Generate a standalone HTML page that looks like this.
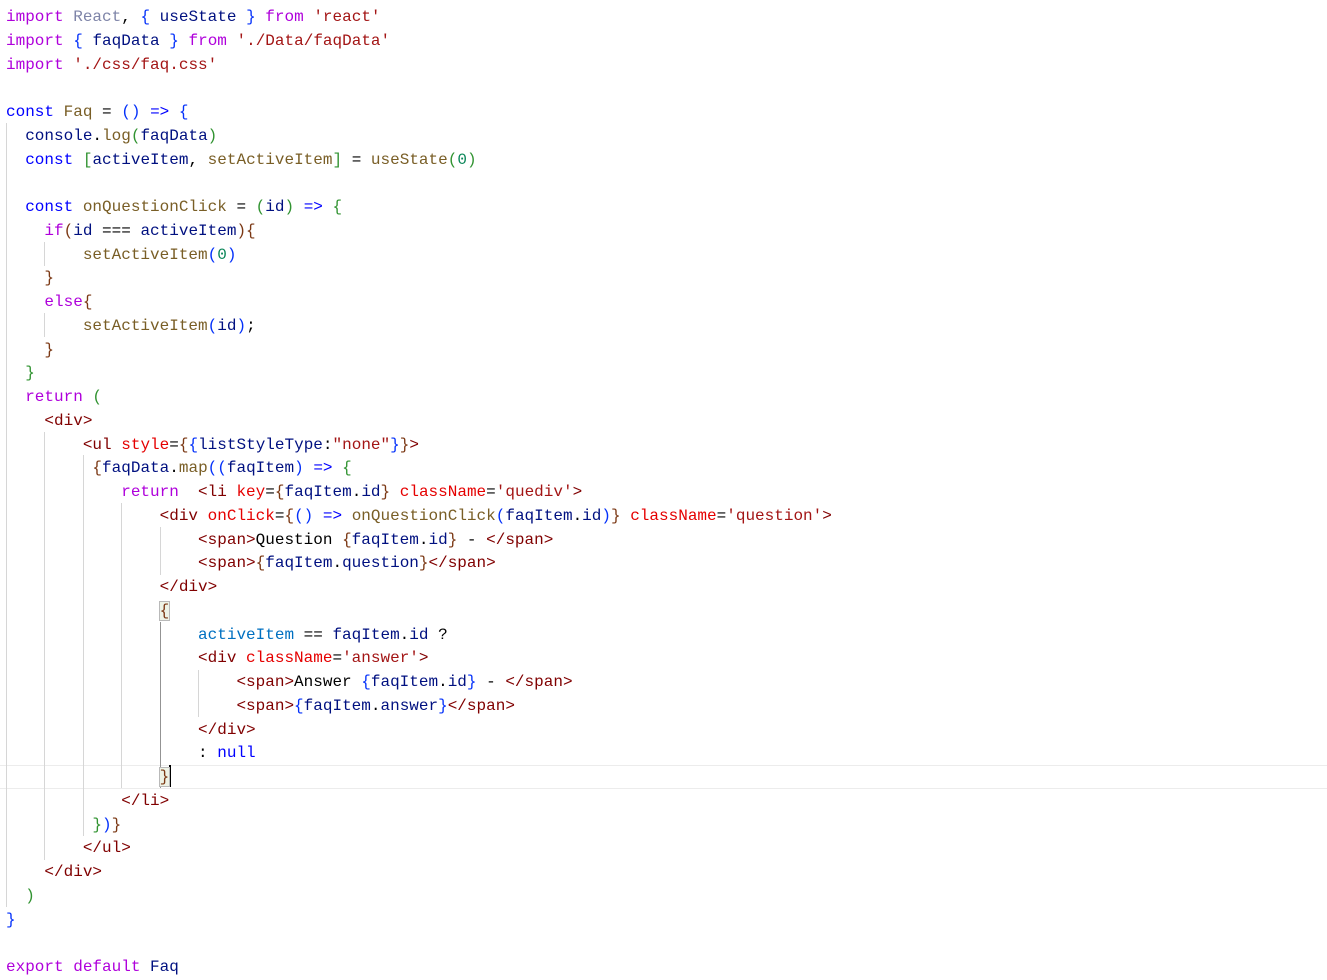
<!DOCTYPE html>
<html><head><meta charset="utf-8"><style>
body{margin:0;background:#fff;width:1327px;height:980px;overflow:hidden;position:relative}
pre{margin:0;position:absolute;left:6px;top:6px;font-family:"Liberation Mono",monospace;font-size:16px;line-height:23.75px;color:#000;white-space:pre}
.k{color:#af00db}.b{color:#0000ff}.v{color:#001080}.f{color:#795e26}.s{color:#a31515}.n{color:#098658}.t{color:#800000}.a{color:#e50000}
.p1{color:#0431fa}.p2{color:#319331}.p3{color:#7b3814}.g{color:#7e84a8}
.gd{position:absolute;width:1px;background:#d6d6d6}
.cl{position:absolute;left:0;width:1327px;top:765px;height:22px;border-top:1px solid #ececec;border-bottom:1px solid #ececec}
.br{outline:1px solid #b9b9b9;background:#eef3e6}
</style></head><body>
<div class="cl"></div>
<div class="gd" style="left:6px;top:123px;height:784px"></div>
<div class="gd" style="left:44px;top:242px;height:24px"></div>
<div class="gd" style="left:44px;top:313px;height:24px"></div>
<div class="gd" style="left:44px;top:432px;height:428px"></div>
<div class="gd" style="left:83px;top:455px;height:381px"></div>
<div class="gd" style="left:121px;top:503px;height:285px"></div>
<div class="gd" style="left:160px;top:527px;height:48px"></div>
<div class="gd" style="left:160px;top:622px;height:166px;background:#939393"></div>
<div class="gd" style="left:198px;top:670px;height:47px"></div>
<div style="position:absolute;left:169px;top:765px;width:2px;height:22px;background:#000"></div>
<pre><span class="k">import</span> <span class="g">React</span>, <span class="p1">{</span> <span class="v">useState</span> <span class="p1">}</span> <span class="k">from</span> <span class="s">'react'</span>
<span class="k">import</span> <span class="p1">{</span> <span class="v">faqData</span> <span class="p1">}</span> <span class="k">from</span> <span class="s">'./Data/faqData'</span>
<span class="k">import</span> <span class="s">'./css/faq.css'</span>

<span class="b">const</span> <span class="f">Faq</span> = <span class="p1">()</span> <span class="b">=&gt;</span> <span class="p1">{</span>
  <span class="v">console</span>.<span class="f">log</span><span class="p2">(</span><span class="v">faqData</span><span class="p2">)</span>
  <span class="b">const</span> <span class="p2">[</span><span class="v">activeItem</span>, <span class="f">setActiveItem</span><span class="p2">]</span> = <span class="f">useState</span><span class="p2">(</span><span class="n">0</span><span class="p2">)</span>

  <span class="b">const</span> <span class="f">onQuestionClick</span> = <span class="p2">(</span><span class="v">id</span><span class="p2">)</span> <span class="b">=&gt;</span> <span class="p2">{</span>
    <span class="k">if</span><span class="p3">(</span><span class="v">id</span> === <span class="v">activeItem</span><span class="p3">){</span>
        <span class="f">setActiveItem</span><span class="p1">(</span><span class="n">0</span><span class="p1">)</span>
    <span class="p3">}</span>
    <span class="k">else</span><span class="p3">{</span>
        <span class="f">setActiveItem</span><span class="p1">(</span><span class="v">id</span><span class="p1">)</span>;
    <span class="p3">}</span>
  <span class="p2">}</span>
  <span class="k">return</span> <span class="p2">(</span>
    <span class="t">&lt;div&gt;</span>
        <span class="t">&lt;ul</span> <span class="a">style</span>=<span class="p3">{</span><span class="p1">{</span><span class="v">listStyleType</span>:<span class="s">"none"</span><span class="p1">}</span><span class="p3">}</span><span class="t">&gt;</span>
         <span class="p3">{</span><span class="v">faqData</span>.<span class="f">map</span><span class="p1">((</span><span class="v">faqItem</span><span class="p1">)</span> <span class="b">=&gt;</span> <span class="p2">{</span>
            <span class="k">return</span>  <span class="t">&lt;li</span> <span class="a">key</span>=<span class="p3">{</span><span class="v">faqItem</span>.<span class="v">id</span><span class="p3">}</span> <span class="a">className</span>=<span class="s">'quediv'</span><span class="t">&gt;</span>
                <span class="t">&lt;div</span> <span class="a">onClick</span>=<span class="p3">{</span><span class="p1">()</span> <span class="b">=&gt;</span> <span class="f">onQuestionClick</span><span class="p1">(</span><span class="v">faqItem</span>.<span class="v">id</span><span class="p1">)</span><span class="p3">}</span> <span class="a">className</span>=<span class="s">'question'</span><span class="t">&gt;</span>
                    <span class="t">&lt;span&gt;</span>Question <span class="p3">{</span><span class="v">faqItem</span>.<span class="v">id</span><span class="p3">}</span> - <span class="t">&lt;/span&gt;</span>
                    <span class="t">&lt;span&gt;</span><span class="p3">{</span><span class="v">faqItem</span>.<span class="v">question</span><span class="p3">}</span><span class="t">&lt;/span&gt;</span>
                <span class="t">&lt;/div&gt;</span>
                <span class="p3 br">{</span>
                    <span class="v" style="color:#0070c1">activeItem</span> == <span class="v">faqItem</span>.<span class="v">id</span> ?
                    <span class="t">&lt;div</span> <span class="a">className</span>=<span class="s">'answer'</span><span class="t">&gt;</span>
                        <span class="t">&lt;span&gt;</span>Answer <span class="p1">{</span><span class="v">faqItem</span>.<span class="v">id</span><span class="p1">}</span> - <span class="t">&lt;/span&gt;</span>
                        <span class="t">&lt;span&gt;</span><span class="p1">{</span><span class="v">faqItem</span>.<span class="v">answer</span><span class="p1">}</span><span class="t">&lt;/span&gt;</span>
                    <span class="t">&lt;/div&gt;</span>
                    : <span class="b">null</span>
                <span class="p3 br">}</span>
            <span class="t">&lt;/li&gt;</span>
         <span class="p2">}</span><span class="p1">)</span><span class="p3">}</span>
        <span class="t">&lt;/ul&gt;</span>
    <span class="t">&lt;/div&gt;</span>
  <span class="p2">)</span>
<span class="p1">}</span>

<span class="k">export</span> <span class="k">default</span> <span class="v">Faq</span></pre>
</body></html>
